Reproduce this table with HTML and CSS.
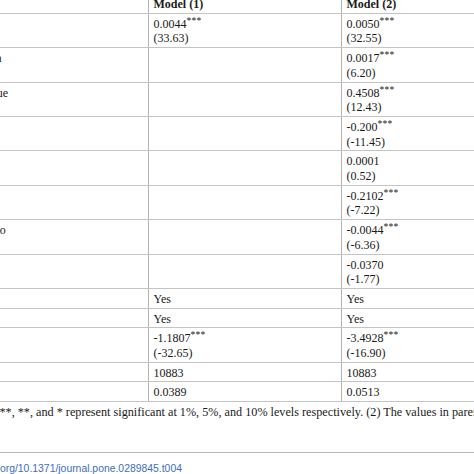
FILE: index.html
```html
<!DOCTYPE html>
<html lang="en">
<head>
<meta charset="utf-8">
<title>Table 4</title>
<link rel="stylesheet" href="styles.css">
</head>
<body>
<div class="frame">
  <table class="results">
    <colgroup><col class="c-label"><col class="c-model"><col class="c-model"></colgroup>
    <tr><td></td><td class="head">Model (1)</td><td class="head">Model (2)</td></tr>
    <tr><td>Land transfer</td><td>0.0044<span class="sig">***</span><br>(33.63)</td><td>0.0050<span class="sig">***</span><br>(32.55)</td></tr>
    <tr><td>Internet coverage area</td><td></td><td>0.0017<span class="sig">***</span><br>(6.20)</td></tr>
    <tr><td>Rural house asset value</td><td></td><td>0.4508<span class="sig">***</span><br>(12.43)</td></tr>
    <tr><td>Age</td><td></td><td>-0.200<span class="sig">***</span><br>(-11.45)</td></tr>
    <tr><td>Gender</td><td></td><td>0.0001<br>(0.52)</td></tr>
    <tr><td>Education</td><td></td><td>-0.2102<span class="sig">***</span><br>(-7.22)</td></tr>
    <tr><td>Household labour ratio</td><td></td><td>-0.0044<span class="sig">***</span><br>(-6.36)</td></tr>
    <tr><td>Health status</td><td></td><td>-0.0370<br>(-1.77)</td></tr>
    <tr><td>Village FE</td><td>Yes</td><td>Yes</td></tr>
    <tr><td>Year FE</td><td>Yes</td><td>Yes</td></tr>
    <tr><td>Constant</td><td>-1.1807<span class="sig">***</span><br>(-32.65)</td><td>-3.4928<span class="sig">***</span><br>(-16.90)</td></tr>
    <tr><td>N</td><td>10883</td><td>10883</td></tr>
    <tr><td>R2</td><td>0.0389</td><td>0.0513</td></tr>
  </table>
  <p class="note">Note: (1) ***, **, and * represent significant at 1%, 5%, and 10% levels respectively. (2) The values in parentheses are t statistics.</p>
  <div class="rule"></div>
  <p class="doi"><a href="#">https://doi.org/10.1371/journal.pone.0289845.t004</a></p>
</div>
</body>
</html>
```
FILE: styles.css
```css
html, body {
  margin: 0;
  padding: 0;
  background: #fff;
  overflow: hidden;
}

.frame {
  margin: -7px 0 0 -110px;
  width: 900px;
  font-family: "Liberation Serif", "Times New Roman", serif;
  color: #1a1a1a;
}

.results {
  border-collapse: collapse;
  table-layout: fixed;
  font-size: 12px;
  line-height: 14.7px;
}

.c-label { width: 258px; }
.c-model { width: 193px; }

.results td {
  border-top: 1px solid #c4c4c4;
  border-bottom: 1px solid #c4c4c4;
  border-left: 1px solid #b4b4b4;
  border-right: 1px solid #b4b4b4;
  padding: 3px 5px 1px;
  vertical-align: top;
  white-space: nowrap;
}

.results td:first-child {
  border-left: none;
}

.head {
  font-weight: bold;
}

.sig {
  font-size: 9.5px;
  line-height: 0;
  vertical-align: 4px;
  letter-spacing: 0.3px;
}

.note {
  margin: 3px 0 0;
  padding: 0 0 0 56px;
  font-size: 12.2px;
  line-height: 15px;
  white-space: nowrap;
}

.rule {
  height: 0;
  margin-top: 32px;
  border-top: 1px solid #b8b8b8;
}

.doi {
  margin: 10px 0 0;
  padding-left: 62px;
  font-family: "Liberation Sans", Arial, sans-serif;
  font-size: 10.4px;
  line-height: 12px;
  white-space: nowrap;
}

.doi a {
  color: #3d6ec0;
  text-decoration: none;
}
```
